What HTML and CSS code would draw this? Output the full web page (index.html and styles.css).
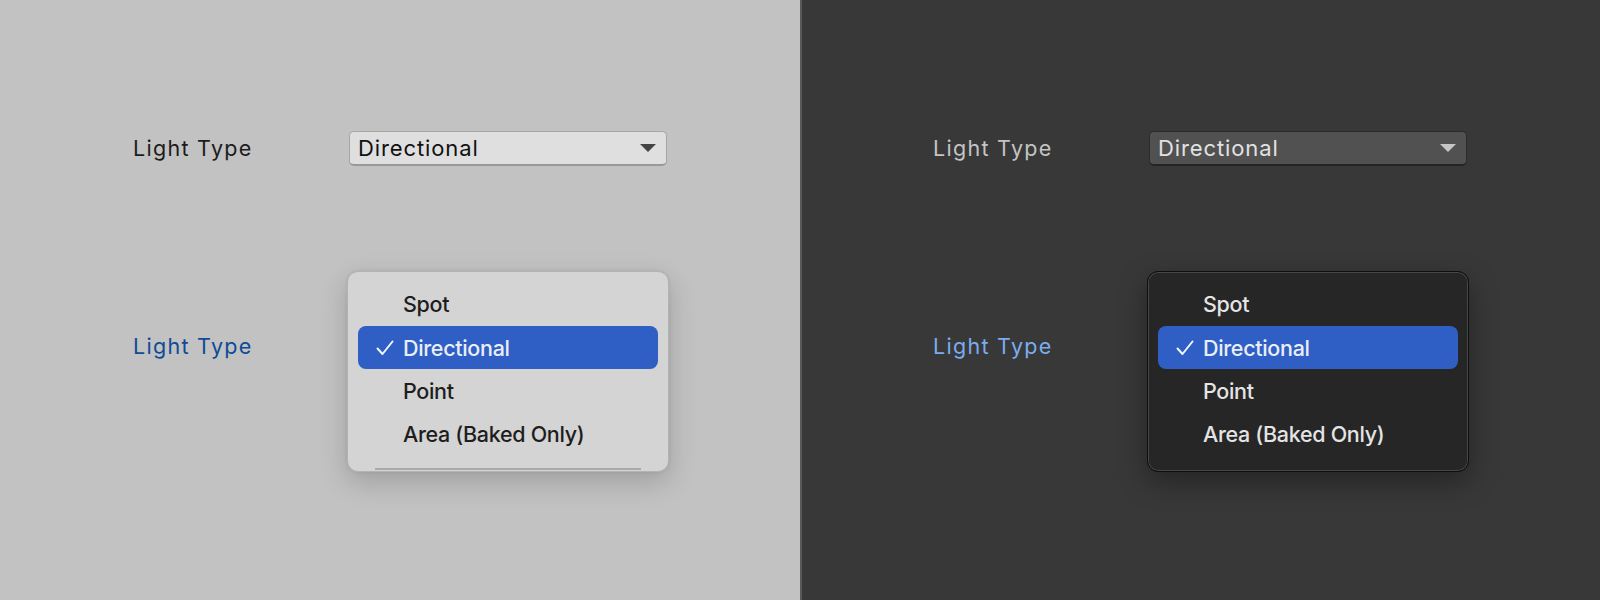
FILE: index.html
```html
<!DOCTYPE html>
<html lang="en">
<head>
  <meta charset="UTF-8">
  <title>Light Type dropdown</title>
  <link rel="stylesheet" href="styles.css">
</head>
<body>
  <main class="themes">
    <section class="panel light">
      <div class="field">
        <span class="label">Light Type</span>
        <div class="dropdown">
          <span>Directional</span>
          <span class="arrow"></span>
        </div>
      </div>

      <div class="field open">
        <span class="label active">Light Type</span>
        <ul class="menu">
          <li>Spot</li>
          <li class="selected">
            <svg class="check" width="18" height="16" viewBox="0 0 18 16"><polyline points="1.5,8.5 6.5,14 16.5,1.5" fill="none" stroke="currentColor" stroke-width="2" stroke-linecap="round" stroke-linejoin="round"/></svg>
            Directional
          </li>
          <li>Point</li>
          <li>Area (Baked Only)</li>
          <li class="separator"></li>
        </ul>
      </div>
    </section>

    <section class="panel dark">
      <div class="field">
        <span class="label">Light Type</span>
        <div class="dropdown">
          <span>Directional</span>
          <span class="arrow"></span>
        </div>
      </div>

      <div class="field open">
        <span class="label active">Light Type</span>
        <ul class="menu">
          <li>Spot</li>
          <li class="selected">
            <svg class="check" width="18" height="16" viewBox="0 0 18 16"><polyline points="1.5,8.5 6.5,14 16.5,1.5" fill="none" stroke="currentColor" stroke-width="2" stroke-linecap="round" stroke-linejoin="round"/></svg>
            Directional
          </li>
          <li>Point</li>
          <li>Area (Baked Only)</li>
          <li class="separator"></li>
        </ul>
      </div>
    </section>
  </main>
</body>
</html>
```

FILE: styles.css
```css
body {
  margin: 0;
  font-family: Inter, "Noto Sans", sans-serif;
}

.themes {
  display: flex;
  height: 600px;
}

.panel {
  box-sizing: border-box;
  width: 800px;
  padding: 131px 0 0 133px;
}

.light {
  background-color: #c2c2c2;
}

.dark {
  background-color: #383838;
  border-left: 2px solid #595959;
  padding-left: 131px;
}

.field {
  display: flex;
  align-items: center;
}

.label {
  width: 216px;
  font-size: 21.5px;
  letter-spacing: 0.06em;
  line-height: 35px;
}

.light .label {
  color: #1c1c1c;
}

.dark .label {
  color: #c4c4c4;
}

.light .label.active {
  color: #0e4a98;
}

.dark .label.active {
  color: #7bacee;
}

.dropdown {
  box-sizing: border-box;
  width: 318px;
  height: 35px;
  border-radius: 5px;
  padding: 0 10px 0 8px;
  display: flex;
  align-items: center;
  justify-content: space-between;
  font-size: 22px;
  letter-spacing: 0.04em;
}

.light .dropdown {
  background-color: #dfdfdf;
  border: 1px solid #a6a6a6;
  border-bottom: 2px solid #999;
  color: #111;
}

.dark .dropdown {
  background-color: #515151;
  border: 1px solid #2b2b2b;
  border-bottom: 2px solid #242424;
  color: #e2e2e2;
}

.arrow {
  width: 0;
  height: 0;
  border-left: 8px solid transparent;
  border-right: 8px solid transparent;
  border-top: 8px solid #444;
}

.dark .arrow {
  border-top-color: #c6c6c6;
}

/* open popup row */
.open {
  align-items: flex-start;
  margin-top: 105px;
}

.open .label {
  width: 214px;
  margin-top: 58px;
}

.menu {
  box-sizing: border-box;
  list-style: none;
  margin: 0;
  width: 322px;
  height: 201px;
  padding: 10px 10px 0;
  border-radius: 11px;
  overflow: hidden;
  font-size: 21.5px;
  font-weight: 500;
  letter-spacing: -0.015em;
}

.light .menu {
  background-color: #d4d4d4;
  border: 1px solid #b3b3b3;
  color: #1e1e1e;
  box-shadow: 0 10px 28px rgba(0, 0, 0, 0.18), 0 0 4px rgba(0, 0, 0, 0.08);
}

.dark .menu {
  background-color: #262626;
  border: 1px solid #0e0e0e;
  color: #e4e4e4;
  box-shadow: inset 0 0 0 1px #474747, 0 10px 28px rgba(0, 0, 0, 0.35);
}

.menu li {
  position: relative;
  height: 43.5px;
  line-height: 45px;
  padding-left: 45px;
  border-radius: 8px;
}

.menu li.selected {
  background-color: #2f5fc4;
  color: #e9eef9;
  height: 43px;
}

.check {
  position: absolute;
  left: 18px;
  top: 14px;
  color: #f2f5fc;
}

.menu li.separator {
  height: 2px;
  margin: 12px 17px 0;
  padding: 0;
  border-radius: 0;
}

.light .separator {
  background-color: #aaa;
}

.dark .separator {
  background-color: #262626;
}
```
